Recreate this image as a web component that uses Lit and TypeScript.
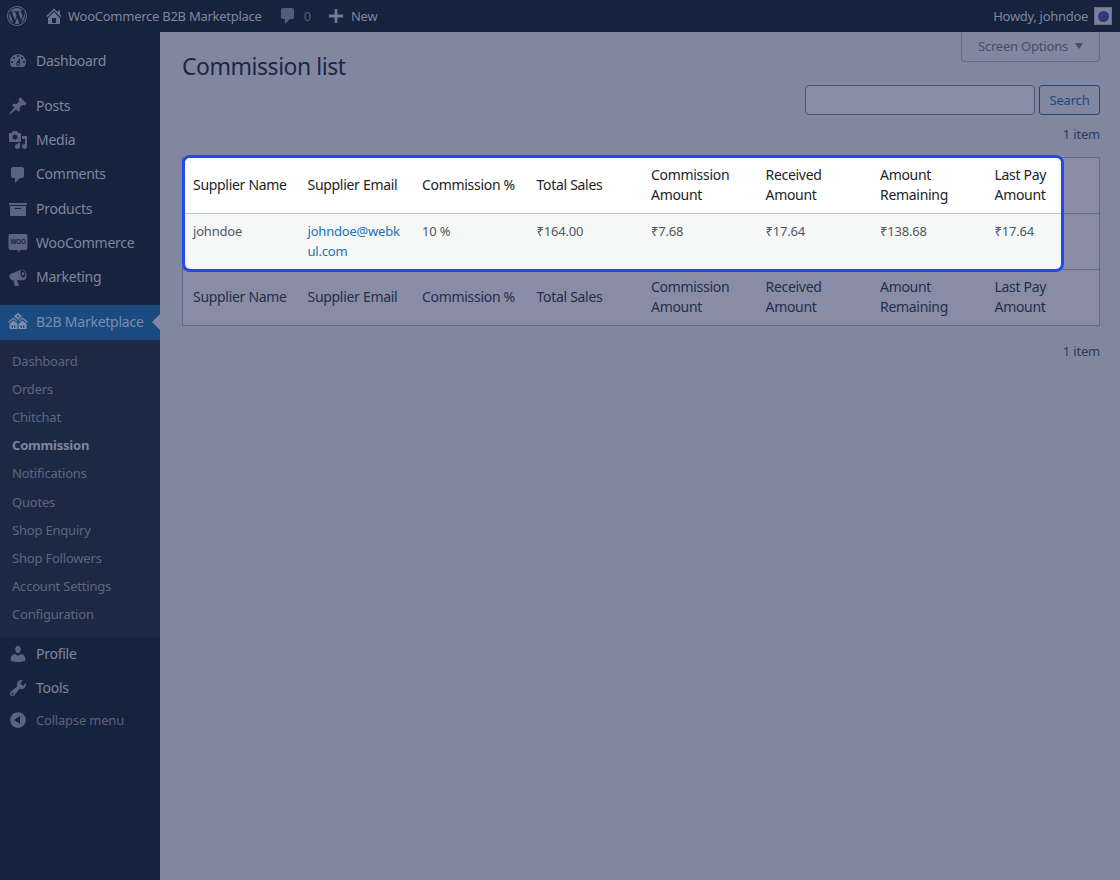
import { LitElement, html, css, svg } from "lit";
import { customElement } from "lit/decorators.js";

const P: Record<string, string> = {
  wp: "M20 10c0-5.52-4.48-10-10-10S0 4.48 0 10s4.48 10 10 10 10-4.48 10-10zM10 1.01c4.96 0 8.99 4.03 8.99 8.99s-4.03 8.99-8.99 8.99S1.01 14.96 1.01 10 5.04 1.01 10 1.01zM8.01 14.82L4.96 6.61c.49-.03 1.05-.08 1.05-.08.43-.05.38-1.01-.06-.99 0 0-1.29.1-2.13.1-.15 0-.33 0-.52-.01 1.44-2.17 3.9-3.6 6.7-3.6 2.09 0 3.99.79 5.41 2.09-.6-.08-1.45.35-1.45 1.42 0 .66.38 1.22.79 1.88.31.54.5 1.22.5 2.21 0 1.34-1.27 4.48-1.27 4.48l-2.71-7.5c.48-.03.75-.16.75-.16.43-.05.38-1.1-.05-1.08 0 0-1.3.11-2.14.11-.78 0-2.11-.11-2.11-.11-.43-.02-.48 1.06-.05 1.08l.84.08 1.12 3.04zm6.02 2.15L16.64 10s.67-1.69.39-3.81c.63 1.14.94 2.42.94 3.81 0 2.96-1.56 5.58-3.94 6.97zM2.68 6.77L6.5 17.25c-2.67-1.3-4.47-4.08-4.47-7.25 0-1.16.2-2.23.65-3.23zm7.45 4.53l2.29 6.25c-.75.27-1.57.42-2.42.42-.72 0-1.41-.11-2.06-.3z",
  home: "M16 8.5l1.53 1.53-1.06 1.06L10 4.62l-6.47 6.47-1.06-1.06L10 2.5l4 4v-2h2v4zm-6-2.46l6 5.99V18H4v-5.97zM12 17v-5H8v5h4z",
  comment: "M5 2h9c1.1 0 2 .9 2 2v7c0 1.1-.9 2-2 2h-2l-5 5v-5H5c-1.1 0-2-.9-2-2V4c0-1.1.9-2 2-2z",
  plus: "M17 8.5v3h-5.5V17h-3v-5.500H3v-3h5.500V3h3v5.500z",
  dashboard: "M3.76 16h12.48c1.1-1.37 1.76-3.11 1.76-5 0-4.42-3.58-8-8-8s-8 3.58-8 8c0 1.89.66 3.63 1.76 5zM10 4c.55 0 1 .45 1 1s-.45 1-1 1-1-.45-1-1 .45-1 1-1zM6 6c.55 0 1 .45 1 1s-.45 1-1 1-1-.45-1-1 .45-1 1-1zm8 0c.55 0 1 .45 1 1s-.45 1-1 1-1-.45-1-1 .45-1 1-1zm-5.37 5.55L12 7v6c0 1.1-.9 2-2 2s-2-.9-2-2c0-.57.24-1.08.63-1.45zM4 10c.55 0 1 .45 1 1s-.45 1-1 1-1-.45-1-1 .45-1 1-1zm12 0c.55 0 1 .45 1 1s-.45 1-1 1-1-.45-1-1 .45-1 1-1zm-5 3c0-.55-.45-1-1-1s-1 .45-1 1 .45 1 1 1 1-.45 1-1z",
  pin: "M10.44 3.02l1.82-1.82 6.36 6.35-1.83 1.82c-1.05-.68-2.48-.57-3.41.36l-.75.75c-.92.93-1.04 2.35-.35 3.41l-1.83 1.82-2.41-2.41-2.8 2.79c-.42.42-3.38 2.71-3.8 2.29s1.86-3.39 2.28-3.81l2.79-2.79L4.1 9.36l1.83-1.82c1.05.69 2.48.57 3.4-.36l.75-.75c.93-.92 1.05-2.35.36-3.41z",
  media: "M13 11V4c0-.55-.45-1-1-1h-1.67L9 1H5L3.67 3H2c-.55 0-1 .45-1 1v7c0 .55.45 1 1 1h10c.55 0 1-.45 1-1zM7 4.5c1.38 0 2.5 1.12 2.5 2.5S8.38 9.5 7 9.5 4.5 8.38 4.5 7 5.62 4.5 7 4.5zM14 6h5v10.5c0 1.38-1.12 2.5-2.5 2.5S14 17.88 14 16.5s1.12-2.5 2.5-2.5c.17 0 .34.02.5.05V9h-3V6zm-4 8.05V13h2v3.5c0 1.38-1.12 2.5-2.5 2.5S7 17.88 7 16.5 8.12 14 9.5 14c.17 0 .34.02.5.05z",
  archive: "M19 4v2H1V4h18zM2 7h16v10H2V7zm11 3V9H7v1h6z",
  megaphone: "M11.2 3.6c.6-.5 1.3-.9 2-1.1 2.3-.6 4.4 1.7 5 4.4.7 2.8-.1 5.6-2.2 6.2-.2.1-.5.1-.7.1H9l2 5.1c.1.4-.2.7-.5.7H7.3c-.3 0-.5-.2-.6-.5l-1.1-5.3H4.3c-1.1 0-2.2-1.2-2.6-2.7-.4-1.5-.1-3 .9-3.6zm1.4 3.7c.5 2.2 2 3.7 3.2 3.4 1.2-.3 1.8-2.3 1.2-4.5-.5-2.2-2-3.7-3.2-3.4-1.2.3-1.8 2.3-1.2 4.5zm1.3-.4c-.2-1 .1-1.9.7-2 .6-.2 1.3.5 1.5 1.5.3 1-.1 1.9-.7 2-.6.2-1.3-.5-1.5-1.5z",
  user: "M10 9.25c-2.27 0-2.73-3.44-2.73-3.44C7 4.02 7.82 2 9.97 2c2.16 0 2.98 2.02 2.71 3.81 0 0-.41 3.44-2.68 3.44zm0 2.57L12.72 10c2.39 0 4.52 2.33 4.52 4.53v2.49s-3.65 1.13-7.24 1.13c-3.65 0-7.24-1.13-7.24-1.13v-2.49c0-2.25 1.94-4.48 4.47-4.48z",
  tools: "M16.68 9.77c-1.34 1.34-3.3 1.67-4.95.99l-5.41 6.52c-.99.99-2.59.99-3.58 0s-.99-2.59 0-3.57l6.52-5.42c-.68-1.65-.35-3.61.99-4.95 1.28-1.28 3.12-1.62 4.72-1.06l-2.89 2.89 2.82 2.82 2.86-2.87c.53 1.58.18 3.39-1.08 4.65zM3.81 16.21c.4.39 1.04.39 1.43 0 .4-.4.4-1.04 0-1.43-.39-.4-1.03-.4-1.43 0-.39.39-.39 1.03 0 1.43z",
  collapse: "M10 2.16c4.33 0 7.84 3.51 7.84 7.84s-3.51 7.84-7.84 7.84S2.16 14.33 2.16 10 5.71 2.16 10 2.16zm2 11.72V6.12L6.18 9.97z",
  b2b: "M10 .8l4 3.5-4 3.5-4-3.5zM10 3L8.600 4.300 10 5.500l1.400-1.200zM5.500 5.600l3.400 3V10L5.500 7 1.100 10.800 0 10zM14.500 5.600L20 10l-1.100.8L14.500 7l-3.400 3V8.600zM5.500 8.400L9.500 11.800V17H1.500V11.800zM14.500 8.400l4 3.400V17h-8V11.800zM3.700 13.600V15.800H5V13.600zM6 13.600V15.800H7.300V13.600zM12.700 13.600V15.800H14V13.600zM15 13.600V15.800H16.300V13.600z",
};

const ic = (n: string, s = 20) =>
  html`<svg class="ic" width=${s} height=${s} viewBox="0 0 20 20"><path fill-rule="evenodd" d=${P[n]}></path></svg>`;

const woo = svg`<svg class="ic" width="20" height="20" viewBox="0 0 20 20"><path d="M2.500 1h15c1.100 0 2 .9 2 2v12c0 1.100-.9 2-2 2h-5.500l-1.400 2.400-.9-2.400H2.500c-1.100 0-2-.9-2-2V3c0-1.100.9-2 2-2z"></path><text x="10" y="11.400" text-anchor="middle" font-size="6.400" font-weight="700" font-family="Liberation Sans, sans-serif" fill="#17223d">WOO</text></svg>`;

const HEAD = ["Supplier\u00a0Name", "Supplier\u00a0Email", "Commission\u00a0%", "Total\u00a0Sales", "Commission Amount", "Received Amount", "Amount Remaining", "Last Pay Amount"];
const ROW = ["johndoe", "", "10 %", "₹164.00", "₹7.68", "₹17.64", "₹138.68", "₹17.64"];
const TOP1 = [["dashboard", "Dashboard"]];
const TOP2 = [["pin", "Posts"], ["media", "Media"], ["comment", "Comments"], ["archive", "Products"], ["woo", "WooCommerce"], ["megaphone", "Marketing"]];
const SUB = ["Dashboard", "Orders", "Chitchat", "Commission", "Notifications", "Quotes", "Shop Enquiry", "Shop Followers", "Account Settings", "Configuration"];
const TOP3 = [["user", "Profile"], ["tools", "Tools"]];

@customElement("app-root")
export class AppRoot extends LitElement {
  static styles = css`
    :host { display: block; width: 1120px; height: 880px; overflow: hidden; font-family: "Noto Sans", sans-serif; font-size: 13px; letter-spacing: -.2px; color: #2a3350; background: #81879e; }
    * { box-sizing: border-box; }
    .ic { fill: currentColor; display: block; flex: none; }
    .bar { height: 32px; background: #17223d; color: #7e869f; display: flex; align-items: center; padding: 0 8px 0 7px; line-height: 32px; }
    .bar .wp { margin-right: 17px; color: #5a6380; }
    .bar .home { margin-right: 4px; color: #6a7290; }
    .bar .name { margin-right: 16px; letter-spacing: -.26px; }
    .bar .cm { margin-right: 6px; color: #545d78; }
    .bar .count { color: #565f7b; margin-right: 15px; }
    .bar .plus { color: #6f7791; }
    .bar .new { margin-left: 5px; }
    .bar .howdy { margin-left: auto; margin-right: 6px; letter-spacing: -.3px; }
    .avatar { width: 18px; height: 18px; background: #7b8298; border: 1px solid #68708a; display: grid; place-items: center; }
    .avatar i { width: 11px; height: 11px; border-radius: 50%; background: #2f3a78; display: block; }
    .body { display: flex; height: 848px; }
    .side { width: 160px; background: #17223d; color: #7e869f; padding-top: 12px; flex: none; font-size: 14px; line-height: 18.2px; letter-spacing: -.25px; }
    .item { display: flex; align-items: center; height: 34.2px; padding-left: 8px; gap: 8px; }
    .item .ic { color: #5a6380; }
    .sep { height: 10.95px; }
    .item.active { background: #1b4a80; color: #7e8bab; height: 34.5px; position: relative; }
    .item.active .ic { color: #7e8bab; }
    .active::after { content: ""; position: absolute; right: 0; top: 9px; border: 8px solid transparent; border-right-color: #81879e; border-left-width: 0; }
    .sub { background: #1d2942; padding: 7px 0 8px; font-size: 13px; color: #5c6681; letter-spacing: -.2px; }
    .sub div { height: 28.2px; line-height: 18.2px; padding: 5px 12px; }
    .sub .cur { color: #7e869f; font-weight: 700; }
    .item.collapse { font-size: 13px; color: #5a6380; height: 30.5px; letter-spacing: -.2px; }
    .main { flex: 1; padding: 0 20px 0 22px; min-width: 0; }
    .head { display: flex; justify-content: space-between; align-items: flex-start; height: 53px; }
    h1 { margin: 17px 0 0; font-size: 23px; font-weight: 400; line-height: 34px; color: #1d2644; letter-spacing: -.47px; }
    .opts { width: 139px; height: 30px; padding-bottom: 2px; border: 1px solid #656c85; border-top: 0; border-radius: 0 0 4px 4px; display: flex; align-items: center; justify-content: center; gap: 7px; color: #454e6b; }
    .opts i { border: 4.500px solid transparent; border-top: 6px solid #454e6b; border-bottom: 0; }
    .search { display: flex; justify-content: flex-end; gap: 4px; }
    .search .in { width: 230px; height: 30px; background: #888da6; border: 1px solid #4e566f; border-radius: 4px; }
    .search .btn { width: 61px; height: 30px; border: 1px solid #1b4a80; border-radius: 3px; color: #1b4a80; display: grid; place-items: center; background: #81879e; }
    .count-row { text-align: right; height: 18px; line-height: 18px; color: #30395a; }
    .top { margin: 10px 0 14px; }
    .bottom { margin-top: 16px; }
    .wrap { position: relative; }
    table { border-collapse: separate; border-spacing: 0; table-layout: fixed; width: 918px; }
    th, td { text-align: left; font-weight: 400; padding: 7px 10px 8px; vertical-align: top; line-height: 20px; word-break: break-all; }
    th { font-size: 14px; letter-spacing: -.3px; word-break: normal; vertical-align: middle; }
    .under { background: #888da5; border: 1px solid #656c85; color: #252e4d; }
    .under .hline th, .under .rline td { border-bottom: 1px solid #656c85; }
    .under th, .under td { color: #252e4d; }
    .spot { position: absolute; left: 0; top: -2px; width: 882px; height: 117px; border: 3px solid #2347f5; border-radius: 8px; overflow: hidden; background: #f6f7f7; }
    .spot table { margin-left: -2px; width: 916px; }
    .spot thead { background: #fff; }
    .spot th { color: #1d2327; border-bottom: 1px solid #c3c4c7; }
    .spot td { color: #50575e; }
    a { color: #2271b1; text-decoration: none; }
    .under a { color: #1b4a80; }
  `;

  private cells() {
    return ROW.map((v, i) => html`<td>${i === 1 ? html`<a>johndoe@webkul.com</a>` : v}</td>`);
  }
  private head() {
    return HEAD.map((h) => html`<th>${h}</th>`);
  }
  private navItem(i: string[]) {
    return html`<div class="item">${i[0] === "woo" ? woo : ic(i[0])}<span>${i[1]}</span></div>`;
  }

  render() {
    return html`
      <div class="bar">
        <span class="wp">${ic("wp")}</span>
        <span class="home">${ic("home")}</span>
        <span class="name">WooCommerce B2B Marketplace</span>
        <span class="cm">${ic("comment")}</span>
        <span class="count">0</span>
        <span class="plus">${ic("plus")}</span>
        <span class="new">New</span>
        <span class="howdy">Howdy, johndoe</span>
        <span class="avatar"><i></i></span>
      </div>
      <div class="body">
        <nav class="side">
          ${TOP1.map((i) => this.navItem(i))}
          <div class="sep"></div>
          ${TOP2.map((i) => this.navItem(i))}
          <div class="sep"></div>
          <div class="item active">${ic("b2b")}<span>B2B Marketplace</span></div>
          <div class="sub">
            ${SUB.map((s) => html`<div class=${s === "Commission" ? "cur" : ""}>${s}</div>`)}
          </div>
          ${TOP3.map((i) => this.navItem(i))}
          <div class="item collapse">${ic("collapse")}<span>Collapse menu</span></div>
        </nav>
        <main class="main">
          <div class="head">
            <h1>Commission list</h1>
            <div class="opts">Screen Options <i></i></div>
          </div>
          <div class="search"><div class="in"></div><div class="btn">Search</div></div>
          <div class="count-row top">1 item</div>
          <div class="wrap">
            <table class="under">
              <thead><tr class="hline">${this.head()}</tr></thead>
              <tbody><tr class="rline">${this.cells()}</tr></tbody>
              <tfoot><tr>${this.head()}</tr></tfoot>
            </table>
            <div class="spot">
              <table>
                <thead><tr>${this.head()}</tr></thead>
                <tbody><tr>${this.cells()}</tr></tbody>
              </table>
            </div>
          </div>
          <div class="count-row bottom">1 item</div>
        </main>
      </div>
    `;
  }
}
